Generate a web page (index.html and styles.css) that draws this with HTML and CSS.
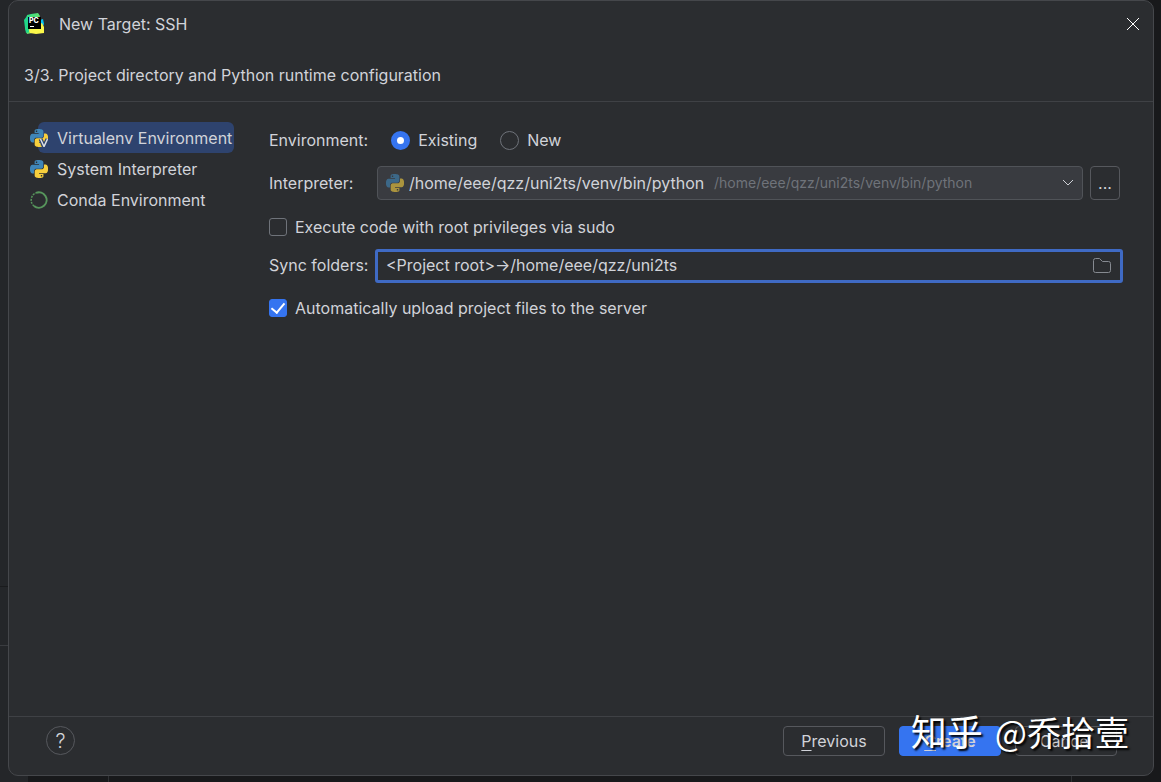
FILE: index.html
```html
<!DOCTYPE html>
<html lang="en">
<head>
    <meta charset="UTF-8">
    <meta name="viewport" content="width=device-width, initial-scale=1.0">
    <title>New Target: SSH</title>
    <link rel="stylesheet" href="styles.css">
</head>
<body>
    <!-- Shared icon shapes -->
    <svg class="defs" width="0" height="0" aria-hidden="true">
        <symbol id="python" viewBox="0 0 24 24">
            <path class="py-blue" d="M14.25.18l.9.2.73.26.59.3.45.32.34.34.25.34.16.33.1.3.04.26.02.2-.01.13V8.5l-.05.63-.13.55-.21.46-.26.38-.3.31-.33.25-.35.19-.35.14-.33.1-.3.07-.26.04-.21.02H8.77l-.69.05-.59.14-.5.22-.41.27-.33.32-.27.35-.2.36-.15.37-.1.35-.07.32-.04.27-.02.21v3.06H3.17l-.21-.03-.28-.07-.32-.12-.35-.18-.36-.26-.36-.36-.35-.46-.32-.59-.28-.73-.21-.88-.14-1.05-.05-1.23.06-1.22.16-1.04.24-.87.32-.71.36-.57.4-.44.42-.33.42-.24.4-.16.36-.1.32-.05.24-.01h.16l.06.01h8.16v-.83H6.18l-.01-2.75-.02-.37.05-.34.11-.31.17-.28.25-.26.31-.23.38-.2.44-.18.51-.15.58-.12.64-.1.71-.06.77-.04.84-.02 1.27.05zm-6.3 1.98l-.23.33-.08.41.08.41.23.34.33.22.41.09.41-.09.33-.22.23-.34.08-.41-.08-.41-.23-.33-.33-.22-.41-.09-.41.09z"/>
            <path class="py-yellow" d="M21.1 6.11l.28.06.32.12.35.18.36.27.36.35.35.47.32.59.28.73.21.88.14 1.04.05 1.23-.06 1.23-.16 1.04-.24.86-.32.71-.36.57-.4.45-.42.33-.42.24-.4.16-.36.09-.32.05-.24.02-.16-.01h-8.22v.82h5.84l.01 2.76.02.36-.05.34-.11.31-.17.29-.25.25-.31.24-.38.2-.44.17-.51.15-.58.13-.64.09-.71.07-.77.04-.84.01-1.27-.04-1.07-.14-.9-.2-.73-.25-.59-.3-.45-.33-.34-.34-.25-.34-.16-.33-.1-.3-.04-.25-.02-.2.01-.13v-5.34l.05-.64.13-.54.21-.46.26-.38.3-.32.33-.24.35-.2.35-.14.33-.1.3-.06.26-.04.21-.02.13-.01h5.84l.69-.05.59-.14.5-.21.41-.28.33-.32.27-.35.2-.36.15-.36.1-.35.07-.32.04-.28.02-.21V6.07h2.09l.14.01zm-6.47 14.25l-.23.33-.08.41.08.41.23.33.33.23.41.08.41-.08.33-.23.23-.33.08-.41-.08-.41-.23-.33-.33-.23-.41-.08-.41.08z"/>
        </symbol>
    </svg>

    <main class="dialog">
        <header class="title-bar">
            <svg class="app-icon" viewBox="0 0 22 22" aria-hidden="true">
                <defs>
                    <linearGradient id="logo-green" x1="0" y1="0" x2="1" y2="1">
                        <stop offset="0" stop-color="#21d789"/>
                        <stop offset="1" stop-color="#9be85a"/>
                    </linearGradient>
                </defs>
                <path fill="url(#logo-green)" d="M3 2l4-1 7-1 2 3-2 5-6 12-5 1-2-6 1-8z"/>
                <path fill="#07c3f2" d="M16 7l3-1 1 5-2 4-3-4z"/>
                <path fill="#fcf84a" d="M18 10l2 4v6l-8 1-6-1-2-4 10-4z"/>
                <path fill="#21d789" d="M0 7l3-4 3 3-1 13-3 1-1-5z"/>
                <path fill="#000" d="M4 4h13v12H4z"/>
                <text class="app-icon-text" x="5" y="10">PC</text>
                <path fill="#fff" d="M6 13h4v1H6z"/>
            </svg>
            <h1>New Target: SSH</h1>
            <button type="button" class="close-btn" aria-label="Close">
                <svg viewBox="0 0 14 14" width="14" height="14"><path d="M1 1l12 12M13 1L1 13"/></svg>
            </button>
        </header>
        <h2 class="step-title">3/3. Project directory and Python runtime configuration</h2>

        <div class="content">
            <nav class="sidebar">
                <a href="#virtualenv" class="nav-item active">
                    <svg class="icon" viewBox="0 0 18 18" aria-hidden="true">
                        <use href="#python" width="18" height="18"/>
                        <path class="v-outline" d="M10.500 10l3.500 7.500L17.500 10"/>
                        <path class="v-mark" d="M10.500 10l3.500 7.500L17.500 10"/>
                    </svg>
                    Virtualenv Environment
                </a>
                <a href="#system" class="nav-item">
                    <svg class="icon" viewBox="0 0 18 18" aria-hidden="true"><use href="#python" width="18" height="18"/></svg>
                    System Interpreter
                </a>
                <a href="#conda" class="nav-item">
                    <svg class="icon conda" viewBox="0 0 18 18" aria-hidden="true">
                        <path d="M6 1.900A7.700 7.700 0 1 1 4 15"/>
                        <path class="dots" d="M4 15A7.700 7.700 0 0 1 6 1.900"/>
                    </svg>
                    Conda Environment
                </a>
            </nav>

            <form class="settings">
                <div class="row radio-row">
                    <span class="label">Environment:</span>
                    <label class="option"><input type="radio" name="environment" checked>Existing</label>
                    <label class="option"><input type="radio" name="environment">New</label>
                </div>
                <div class="row interpreter-row">
                    <label class="label" for="interpreter">Interpreter:</label>
                    <div class="combo">
                        <svg class="icon dimmed" viewBox="0 0 18 18" aria-hidden="true"><use href="#python" width="18" height="18"/></svg>
                        <select id="interpreter">
                            <option>/home/eee/qzz/uni2ts/venv/bin/python</option>
                        </select>
                        <span class="hint">/home/eee/qzz/uni2ts/venv/bin/python</span>
                        <svg class="chevron" viewBox="0 0 12 8" aria-hidden="true"><path d="M1 1l5 5 5-5"/></svg>
                    </div>
                    <button type="button" class="more-btn" aria-label="Browse interpreters">...</button>
                </div>
                <div class="row check-row">
                    <label class="option"><input type="checkbox" name="sudo">Execute code with root privileges via sudo</label>
                </div>
                <div class="row sync-row">
                    <label class="label" for="sync">Sync folders:</label>
                    <div class="field">
                        <input type="text" id="sync" value="&lt;Project root&gt;→/home/eee/qzz/uni2ts">
                        <button type="button" class="folder-btn" aria-label="Browse folders">
                            <svg viewBox="0 0 20 18" width="20" height="18"><path d="M3.500 1.500h4l3 3h6q2 0 2 2v7q0 2-2 2h-13q-2 0-2-2v-10q0-2 2-2z"/></svg>
                        </button>
                    </div>
                </div>
                <div class="row check-row">
                    <label class="option"><input type="checkbox" name="upload" checked>Automatically upload project files to the server</label>
                </div>
            </form>
        </div>

        <footer class="actions">
            <button type="button" class="help-btn" aria-label="Help">?</button>
            <button type="button" class="btn"><u>P</u>revious</button>
            <button type="button" class="btn btn-primary"><u>C</u>reate</button>
            <button type="button" class="btn">Cancel</button>
        </footer>
    </main>

    <div class="watermark"><span class="brand">知乎</span>@乔拾壹</div>
</body>
</html>
```
FILE: styles.css
```css
* {
    box-sizing: border-box;
}

body {
    margin: 0;
    min-height: 100vh;
    display: flex;
    position: relative;
    font-family: Inter, "Noto Sans", sans-serif;
    font-size: 16px;
    line-height: 20px;
    color: #d1d3d9;
    /* editor behind the dialog: panel dividers over the dark area */
    background:
        linear-gradient(#3a3c40, #3a3c40) 0 645px / 8px 1px no-repeat,
        linear-gradient(#1a1b1d, #1a1b1d) 0 586px / 8px 1px no-repeat,
        linear-gradient(#2f3134, #2f3134) 108px 100% / 1px 6px no-repeat,
        linear-gradient(#2f3134, #2f3134) calc(100% - 89px) 100% / 1px 6px no-repeat,
        linear-gradient(to right, #242629 28px, #18191b 28px);
}

button,
input,
select {
    font: inherit;
    color: inherit;
}

button {
    padding: 0;
    border: 1px solid #56585d;
    border-radius: 4px;
    background: none;
    cursor: pointer;
}

svg {
    flex: none;
    fill: none;
}

.defs {
    position: absolute;
}

.py-blue {
    fill: #3f86b8;
}

.py-yellow {
    fill: #f7cf3d;
}

.icon {
    width: 18px;
    height: 18px;
}

.dialog {
    flex: 1;
    display: flex;
    flex-direction: column;
    margin: 0 7px 6px 8px;
    background-color: #2b2d30;
    border: 1px solid #45474b;
    border-radius: 10px;
}

/* Title bar */
.title-bar {
    display: flex;
    align-items: center;
    gap: 13px;
    height: 46px;
    padding: 0 12px 0 15px;
}

.app-icon {
    width: 22px;
    height: 22px;
}

.app-icon-text {
    font-size: 7px;
    font-weight: 800;
    fill: #fff;
}

h1,
h2 {
    margin: 0;
    font-size: 16px;
    font-weight: 400;
}

.close-btn {
    display: flex;
    margin-left: auto;
    padding: 1px;
    border: none;
    stroke: #fff;
}

.step-title {
    height: 55px;
    padding: 18px 15px 16px;
    border-bottom: 1px solid #3f4145;
}

/* Main area */
.content {
    flex: 1;
    display: flex;
    gap: 35px;
    padding: 20px 33px 20px 29px;
}

.sidebar {
    flex: none;
    width: 196px;
}

.nav-item {
    display: flex;
    align-items: center;
    gap: 9px;
    height: 31px;
    border-radius: 6px;
    color: inherit;
    text-decoration: none;
    white-space: nowrap;
}

.nav-item .icon {
    margin-left: -8px;
}

.nav-item.active {
    background-color: #2e436e;
}

.v-outline {
    stroke: #2e436e;
    stroke-width: 4;
}

.v-mark {
    stroke: #dfe1e5;
    stroke-width: 1.5;
}

.conda {
    stroke: #57965c;
    stroke-width: 2;
}

.conda .dots {
    stroke-dasharray: 2 1;
    stroke-width: 1.5;
}

.settings {
    flex: 1;
    min-width: 0;
}

.row {
    display: flex;
    align-items: center;
}

.label {
    flex: none;
    width: 108px;
}

.option {
    display: flex;
    align-items: center;
    gap: 8px;
}

.radio-row {
    height: 36px;
    gap: 23px;
    margin-bottom: 8px;
}

.radio-row .label {
    width: auto;
}

.interpreter-row {
    margin-bottom: 17px;
}

.check-row {
    height: 20px;
    margin: 15px 0 12px;
}

input[type="radio"],
input[type="checkbox"] {
    appearance: none;
    flex: none;
    width: 18px;
    height: 18px;
    margin: 0;
    border: 1px solid #6f737a;
    border-radius: 3px;
}

input[type="radio"] {
    width: 19px;
    height: 19px;
    border-radius: 50%;
}

input[type="radio"]:checked {
    border: 6px solid #3574f0;
    background-color: #fff;
}

input[type="checkbox"]:checked {
    display: grid;
    place-items: center;
    border-color: #3574f0;
    background-color: #3574f0;
}

input[type="checkbox"]:checked::before {
    content: "";
    width: 6px;
    height: 11px;
    margin-bottom: 3px;
    border: solid #fff;
    border-width: 0 2px 2px 0;
    transform: rotate(40deg);
}

.combo {
    flex: 1;
    display: flex;
    align-items: center;
    height: 34px;
    margin-right: 7px;
    padding: 0 8px;
    background-color: #393b40;
    border: 1px solid #505358;
    border-radius: 4px;
}

.combo select {
    appearance: none;
    margin-left: 5px;
    padding: 0;
    border: none;
    background: none;
    outline: none;
}

.dimmed {
    opacity: 0.6;
}

.hint {
    margin-left: 9px;
    font-size: 14px;
    color: #6f737a;
}

.chevron {
    width: 12px;
    height: 8px;
    margin-left: auto;
    stroke: #ced0d6;
}

.more-btn {
    width: 30px;
    height: 34px;
}

.sync-row {
    margin-right: -3px;
}

.sync-row .label {
    width: 106px;
    padding-bottom: 2px;
}

.field {
    flex: 1;
    display: flex;
    align-items: center;
    height: 34px;
    padding: 0 8px;
    border: 3px solid #3f6ac4;
    border-radius: 3px;
}

.field input {
    flex: 1;
    min-width: 0;
    padding: 0 0 2px;
    border: none;
    background: none;
    outline: none;
}

.folder-btn {
    display: flex;
    border: none;
    stroke: #868a91;
}

/* Bottom buttons */
.actions {
    display: flex;
    align-items: flex-start;
    gap: 14px;
    height: 59px;
    padding: 9px 36px 0 37px;
    border-top: 1px solid #3f4145;
}

.btn {
    width: 102px;
    height: 30px;
}

.btn u {
    text-underline-offset: 3px;
}

.btn-primary {
    border-color: #3574f0;
    background-color: #3574f0;
    font-weight: 600;
}

.help-btn {
    width: 29px;
    height: 29px;
    margin-right: auto;
    border-radius: 50%;
    font-size: 20px;
    font-weight: 300;
}

.watermark {
    position: absolute;
    right: 32px;
    bottom: 28px;
    font-family: "Noto Sans CJK SC", sans-serif;
    font-size: 34px;
    line-height: 44px;
    color: #fff;
    text-shadow: 2px 2px 2px #000;
    pointer-events: none;
}

.brand {
    margin-right: 12px;
    font-size: 36px;
}
```
